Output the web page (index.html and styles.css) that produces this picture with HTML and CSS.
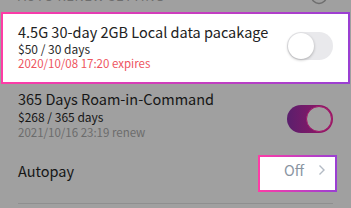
FILE: index.html
```html
<!DOCTYPE html>
<html lang="en">
<head>
<meta charset="utf-8">
<title>Auto renew setting</title>
<link rel="stylesheet" href="styles.css">
</head>
<body>
<div class="screen">
  <div class="section-head">
    <span class="section-title">AUTO RENEW SETTING</span>
    <svg class="info" width="18" height="18" viewBox="0 0 18 18"><circle cx="9" cy="9" r="7.5" fill="none" stroke="#6e6e6e" stroke-width="1.5"/><line x1="9" y1="8" x2="9" y2="13" stroke="#6e6e6e" stroke-width="1.5"/></svg>
  </div>

  <div class="spot plan-spot">
    <div class="plan-text">
      <div class="plan-title">4.5G 30-day 2GB Local data pacakage</div>
      <div class="plan-price">$50 / 30 days</div>
      <div class="plan-date expire">2020/10/08 17:20 expires</div>
    </div>
    <span class="switch switch-off"><span class="knob"></span></span>
  </div>

  <div class="row plan-row">
    <div class="plan-text">
      <div class="plan-title dim">365 Days Roam-in-Command</div>
      <div class="plan-price dim">$268 / 365 days</div>
      <div class="plan-date renew">2021/10/16 23:19 renew</div>
    </div>
    <span class="switch switch-on"><span class="knob"></span></span>
  </div>

  <div class="row autopay-row">
    <span class="autopay-label">Autopay</span>
    <div class="spot value-spot">
      <span class="value-text">Off</span>
      <svg class="chevron" width="8" height="12" viewBox="0 0 8 12"><polyline points="1.5,1.5 6,6 1.5,10.5" fill="none" stroke="#b3bac4" stroke-width="1.4"/></svg>
    </div>
  </div>
</div>
</body>
</html>
```

FILE: styles.css
```css
html, body {
  margin: 0;
  padding: 0;
}
body {
  background: #a0a0a0;
  font-family: "Noto Sans CJK TC", "Noto Sans", sans-serif;
  width: 351px;
  height: 208px;
  overflow: hidden;
}
.screen {
  display: flex;
  flex-direction: column;
}
.section-head {
  height: 20px;
  margin-top: -14px;
  margin-bottom: 6px;
  padding: 0 23px 0 18px;
  display: flex;
  align-items: center;
  justify-content: space-between;
}
.section-title {
  font-size: 13px;
  line-height: 16px;
  color: #6e6e6e;
  letter-spacing: 0.5px;
}
.info {
  display: block;
}
.spot {
  border: 2px solid transparent;
  background:
    linear-gradient(#fff, #fff) padding-box,
    linear-gradient(90deg, #ff3ca6, #9a3fd3) border-box;
}
.plan-spot {
  margin: 0 1px;
  padding: 7px 15px 12px 15px;
  display: flex;
  align-items: center;
  justify-content: space-between;
}
.plan-text {
  align-self: flex-start;
  display: flex;
  flex-direction: column;
}
.plan-title {
  font-size: 14.5px;
  line-height: 21px;
  color: #222;
}
.plan-price {
  font-size: 12px;
  line-height: 14px;
  color: #2a2a2a;
}
.plan-date {
  font-size: 11.5px;
  line-height: 14px;
}
.expire {
  color: #ee5560;
}
.dim {
  color: #161616;
}
.renew {
  color: #6c6c6c;
}
.row {
  margin: 0 18px;
  display: flex;
  justify-content: space-between;
}
.plan-row {
  height: 65px;
  box-sizing: border-box;
  padding-top: 4px;
  align-items: center;
}
.plan-row .plan-price {
  margin-top: 1px;
}
.plan-row .plan-date {
  margin-top: 1px;
}
.switch {
  width: 46px;
  height: 28px;
  border-radius: 14px;
  box-sizing: border-box;
  display: flex;
  align-items: center;
  padding: 1px;
  flex: none;
}
.switch-off {
  background: #e9e9ec;
}
.switch-on {
  background: linear-gradient(90deg, #5a1f6d, #9d1463);
  justify-content: flex-end;
}
.knob {
  width: 26px;
  height: 26px;
  border-radius: 50%;
  box-sizing: border-box;
}
.switch-off .knob {
  background: #fff;
  box-shadow: 0 1px 3px rgba(0, 0, 0, 0.28);
}
.switch-on .knob {
  background: #a0a0a0;
  border: 1px solid #a3166b;
}
.autopay-row {
  height: 55px;
  box-sizing: border-box;
  padding-top: 6px;
  align-items: flex-start;
  border-bottom: 1px solid #8f8f8f;
}
.autopay-label {
  font-size: 14.5px;
  line-height: 22px;
  margin-top: 5px;
  color: #161616;
}
.value-spot {
  margin-right: -4px;
  width: 79px;
  box-sizing: border-box;
  padding: 2px 9px 9px 24px;
  display: flex;
  align-items: center;
  justify-content: space-between;
}
.value-text {
  font-size: 14.5px;
  line-height: 22px;
  color: #8a95a2;
}
.chevron {
  display: block;
}
```
